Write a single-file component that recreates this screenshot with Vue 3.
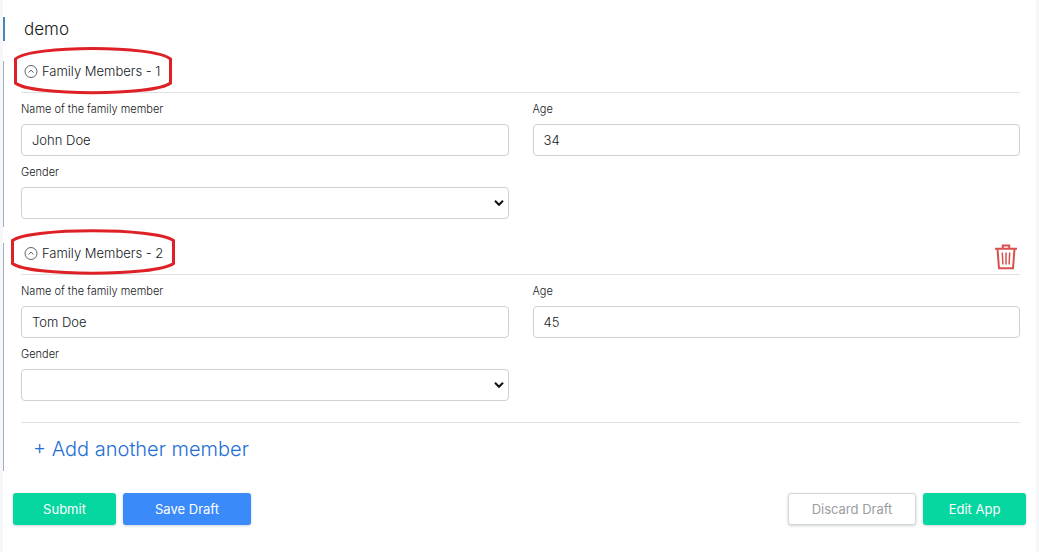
<script setup>
import { ref } from 'vue'

const members = ref([
  { id: 1, name: 'John Doe', age: '34', gender: '', removable: false },
  { id: 2, name: 'Tom Doe', age: '45', gender: '', removable: true },
])
</script>

<template>
  <main class="page">
    <form class="sheet" @submit.prevent>
      <h1 class="title">demo</h1>

      <section v-for="(member, index) in members" :key="member.id" class="member">
        <header class="member-head">
          <button type="button" class="toggle">
            <svg class="chevron" viewBox="0 0 14 14" aria-hidden="true">
              <circle cx="7" cy="7.500" r="6" />
              <path d="M4.500 8.500 7 6.200l2.500 2.300" />
            </svg>
            <span>Family Members - {{ index + 1 }}</span>
          </button>
          <svg v-if="index === 0" class="mark mark-first" viewBox="0 0 160 50" aria-hidden="true">
            <path d="M2.500 13C18 -1 141 -1 157.500 13V37C141 50 18 50 2.500 37Z" />
          </svg>
          <svg v-else class="mark mark-second" viewBox="0 0 164 46" aria-hidden="true">
            <path d="M1.500 11.500C18 -1.500 145 -1.500 162.500 11.500V34.500C145 47.500 18 47.500 1.500 34.500Z" />
          </svg>
          <button v-if="member.removable" type="button" class="remove" aria-label="Remove member">
            <svg viewBox="0 0 22 26" aria-hidden="true">
              <path d="M0 4.800H22M7.800 4.500V1.500H14.200V4.500M2.500 5 4 24.300H18L19.500 5" />
              <path class="thin" d="M7.300 8.500 7.900 20.500M11 8.500V20.500M14.700 8.500 14.100 20.500" />
            </svg>
          </button>
        </header>

        <div class="fields">
          <div class="field">
            <label :for="`name-${member.id}`">Name of the family member</label>
            <input :id="`name-${member.id}`" v-model="member.name" type="text" />
          </div>
          <div class="field">
            <label :for="`age-${member.id}`">Age</label>
            <input :id="`age-${member.id}`" v-model="member.age" type="text" />
          </div>
          <div class="field">
            <label :for="`gender-${member.id}`">Gender</label>
            <div class="select-box">
              <select :id="`gender-${member.id}`" v-model="member.gender">
                <option value=""></option>
              </select>
              <svg class="arrow" viewBox="0 0 10 8" aria-hidden="true">
                <path d="M1 1.800 5 5.800 9 1.800" />
              </svg>
            </div>
          </div>
        </div>

        <div v-if="index === members.length - 1" class="add-row">
          <button type="button" class="add">+ Add another member</button>
        </div>
      </section>

      <footer class="actions">
        <button type="submit" class="btn green">Submit</button>
        <button type="button" class="btn blue wide">Save Draft</button>
        <button type="button" class="btn plain wide push">Discard Draft</button>
        <button type="button" class="btn green">Edit App</button>
      </footer>
    </form>
  </main>
</template>

<style>
body {
  background: #f5f7fb;
}
</style>

<style scoped>
.page {
  box-sizing: border-box;
  min-height: 100vh;
  padding: 0 3px;
  display: flex;
  font-family: Inter, "Liberation Sans", sans-serif;
  font-weight: 300;
  color: #16191c;
}
.page * {
  box-sizing: border-box;
}
.sheet {
  flex: 1;
  min-width: 0;
  padding-top: 17px;
  background: #fff;
}
button,
input,
select {
  font-family: inherit;
  font-weight: inherit;
  color: inherit;
}
.title {
  margin: 0 0 20px;
  padding-left: 19px;
  border-left: 2px solid #4d83b3;
  font-size: 17px;
  line-height: 24px;
  font-weight: inherit;
}
.member {
  margin-bottom: 16px;
  padding: 0 16px 8px 17px;
  border-left: 1px solid #a3aebb;
}
.member-head {
  position: relative;
  height: 32px;
  border-bottom: 1px solid #dfe1e3;
}
.toggle {
  display: flex;
  align-items: center;
  gap: 4px;
  padding: 0 0 0 3px;
  border: 0;
  background: none;
  font-size: 13px;
  line-height: 20px;
}
.chevron {
  width: 14px;
  height: 14px;
  fill: none;
  stroke: #606366;
  stroke-width: 1;
}
.mark {
  position: absolute;
  fill: none;
  stroke: #de2027;
  stroke-width: 3;
  pointer-events: none;
}
.mark-first {
  left: -8px;
  top: -15px;
  width: 160px;
  height: 50px;
}
.mark-second {
  left: -10px;
  top: -14px;
  width: 164px;
  height: 46px;
}
.remove {
  position: absolute;
  right: 3px;
  top: 1px;
  width: 22px;
  height: 26px;
  padding: 0;
  border: 0;
  background: none;
}
.remove svg {
  display: block;
  width: 22px;
  height: 26px;
  fill: none;
  stroke: #d9514e;
  stroke-width: 2;
}
.remove .thin {
  stroke-width: 1.5;
}
.fields {
  display: grid;
  grid-template-columns: 1fr 1fr;
  gap: 8px 24px;
  padding-top: 8px;
}
.field label {
  display: block;
  margin-bottom: 7px;
  font-size: 11px;
  line-height: 16px;
}
.field input,
.field select {
  display: block;
  width: 100%;
  height: 32px;
  padding: 0 10px;
  border: 1px solid #ced0d3;
  border-radius: 4px;
  background: #fff;
  font-size: 13px;
}
.field select {
  appearance: none;
}
.select-box {
  position: relative;
}
.arrow {
  position: absolute;
  right: 5px;
  top: 12px;
  width: 10px;
  height: 8px;
  fill: none;
  stroke: #111;
  stroke-width: 2;
  pointer-events: none;
}
.add-row {
  margin-top: 21px;
  padding: 12px 12px 0;
  border-top: 1px solid #dfe1e3;
}
.add {
  display: block;
  padding: 0;
  border: 0;
  background: none;
  color: #1f6fd6;
  font-size: 20px;
  line-height: 28px;
}
.actions {
  display: flex;
  gap: 7px;
  padding: 6px 10px 24px;
}
.btn {
  width: 103px;
  height: 32px;
  padding: 0;
  border: 0;
  border-radius: 3px;
  font-size: 13px;
  font-weight: 400;
  color: #fff;
  box-shadow: 0 1px 3px rgba(0, 40, 60, 0.2);
}
.wide {
  width: 128px;
}
.green {
  background: #06d6a0;
}
.blue {
  background: #3a8bf9;
}
.plain {
  border: 1px solid #d5d7da;
  background: #fff;
  color: #9a9da2;
}
.push {
  margin-left: auto;
}
</style>
